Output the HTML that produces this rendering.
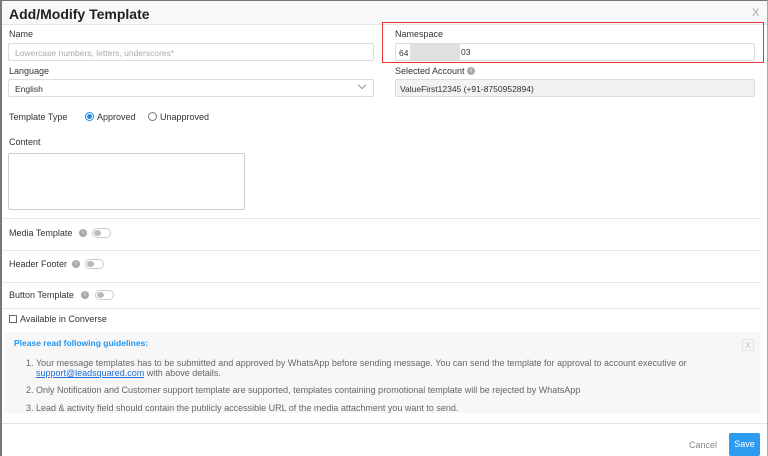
<!DOCTYPE html>
<html><head><style>
*{box-sizing:border-box;margin:0;padding:0}
body{width:768px;height:456px;overflow:hidden;background:#fff;font-family:"Liberation Sans",sans-serif;color:#333;font-size:9px;position:relative}
.a{position:absolute}
.frame{left:0;top:0;width:768px;height:456px;border-left:2px solid #777;border-top:1px solid #777;border-right:1px solid #aaa}
.hdr{left:2px;top:1px;width:765px;height:24px;background:#f7f8fa;border-bottom:1px solid #e6e6e6}
.inp{border:1px solid #ddd;border-radius:2px;background:#fff;height:18px;font-size:8.5px;padding:4px 6px;color:#333}
.lbl{font-size:9px;color:#333}
.sep{left:2px;width:758px;height:1px;background:#e8e8e8}
.tog{width:19px;height:10px;border:1px solid #ccc;border-radius:6px;background:#fff}
.tog:after{content:"";position:absolute;left:1px;top:1px;width:7px;height:6px;border-radius:50%;background:#bbb}
.info{width:8px;height:8px;border-radius:50%;background:#aaa;color:#fff;font-size:6px;text-align:center;line-height:8px}
.rad{width:9px;height:9px;border-radius:50%;border:1px solid #777;background:#fff}
li{margin-bottom:7px}
</style></head><body>
<div class="a frame"></div>
<div class="a hdr"></div>
<div class="a" style="left:9px;top:6px;font-size:14px;font-weight:bold;color:#222">Add/Modify Template</div>
<div class="a" style="left:752px;top:7px;font-size:11px;color:#aaa">X</div>

<div class="a lbl" style="left:9px;top:29px">Name</div>
<div class="a inp" style="left:8px;top:43px;width:366px;color:#aaa">Lowercase numbers, letters, underscores*</div>
<div class="a lbl" style="left:9px;top:66px">Language</div>
<div class="a inp" style="left:8px;top:79px;width:366px">English</div>
<div class="a" style="left:359px;top:82px;width:6px;height:6px;border-right:1px solid #999;border-bottom:1px solid #999;transform:rotate(45deg)"></div>

<div class="a" style="left:382px;top:22px;width:382px;height:41px;border:1.5px solid #e53935"></div>
<div class="a lbl" style="left:395px;top:29px">Namespace</div>
<div class="a inp" style="left:395px;top:43px;width:360px;padding-left:3px">64</div>
<div class="a" style="left:410px;top:44px;width:50px;height:16px;background:#e0e0e0"></div>
<div class="a" style="left:461px;top:47px;font-size:8.5px">03</div>
<div class="a lbl" style="left:395px;top:66px">Selected Account</div>
<div class="a info" style="left:467px;top:67px">i</div>
<div class="a inp" style="left:395px;top:79px;width:360px;background:#f2f2f2;padding-left:4px">ValueFirst12345 (+91-8750952894)</div>

<div class="a lbl" style="left:9px;top:112px">Template Type</div>
<div class="a rad" style="left:85px;top:112px;border-color:#1e88e5;background:radial-gradient(circle,#1e88e5 45%,#fff 52%)"></div>
<div class="a lbl" style="left:97px;top:112px">Approved</div>
<div class="a rad" style="left:148px;top:112px"></div>
<div class="a lbl" style="left:160px;top:112px">Unapproved</div>

<div class="a lbl" style="left:9px;top:137px">Content</div>
<div class="a" style="left:8px;top:153px;width:237px;height:57px;border:1px solid #ccc;border-radius:2px"></div>

<div class="a sep" style="top:218px"></div>
<div class="a lbl" style="left:9px;top:228px">Media Template</div>
<div class="a info" style="left:79px;top:229px">i</div>
<div class="a tog" style="left:92px;top:228px"></div>
<div class="a sep" style="top:250px"></div>
<div class="a lbl" style="left:9px;top:259px">Header Footer</div>
<div class="a info" style="left:72px;top:260px">i</div>
<div class="a tog" style="left:85px;top:259px"></div>
<div class="a sep" style="top:282px"></div>
<div class="a lbl" style="left:9px;top:290px">Button Template</div>
<div class="a info" style="left:81px;top:291px">i</div>
<div class="a tog" style="left:95px;top:290px"></div>
<div class="a sep" style="top:308px"></div>
<div class="a" style="left:9px;top:315px;width:8px;height:8px;border:1px solid #666"></div>
<div class="a lbl" style="left:20px;top:314px">Available in Converse</div>

<div class="a" style="left:5px;top:332px;width:755px;height:81px;background:#f7f7f7"></div>
<div class="a" style="left:14px;top:338px;font-size:8.5px;font-weight:bold;color:#2196f3">Please read following guidelines:</div>
<div class="a" style="left:742px;top:339px;width:12px;height:12px;border:1px solid #e3e3e3;color:#bbb;font-size:8px;text-align:center;line-height:11px">X</div>
<ol class="a" style="left:26px;top:358px;width:690px;font-size:9px;color:#666;line-height:10px;padding-left:10px">
<li>Your message templates has to be submitted and approved by WhatsApp before sending message. You can send the template for approval to account executive or <span style="color:#1e6fd9;text-decoration:underline">support@leadsquared.com</span> with above details.</li>
<li style="margin-bottom:8px">Only Notification and Customer support template are supported, templates containing promotional template will be rejected by WhatsApp</li>
<li>Lead &amp; activity field should contain the publicly accessible URL of the media attachment you want to send.</li>
</ol>

<div class="a" style="left:2px;top:423px;width:765px;height:1px;background:#e3e3e3"></div>
<div class="a" style="left:689px;top:440px;font-size:9px;color:#888">Cancel</div>
<div class="a" style="left:729px;top:433px;width:31px;height:23px;background:#2d9cf0;border-radius:2px;color:#fff;font-size:9px;text-align:center;line-height:23px">Save</div>
</body></html>
